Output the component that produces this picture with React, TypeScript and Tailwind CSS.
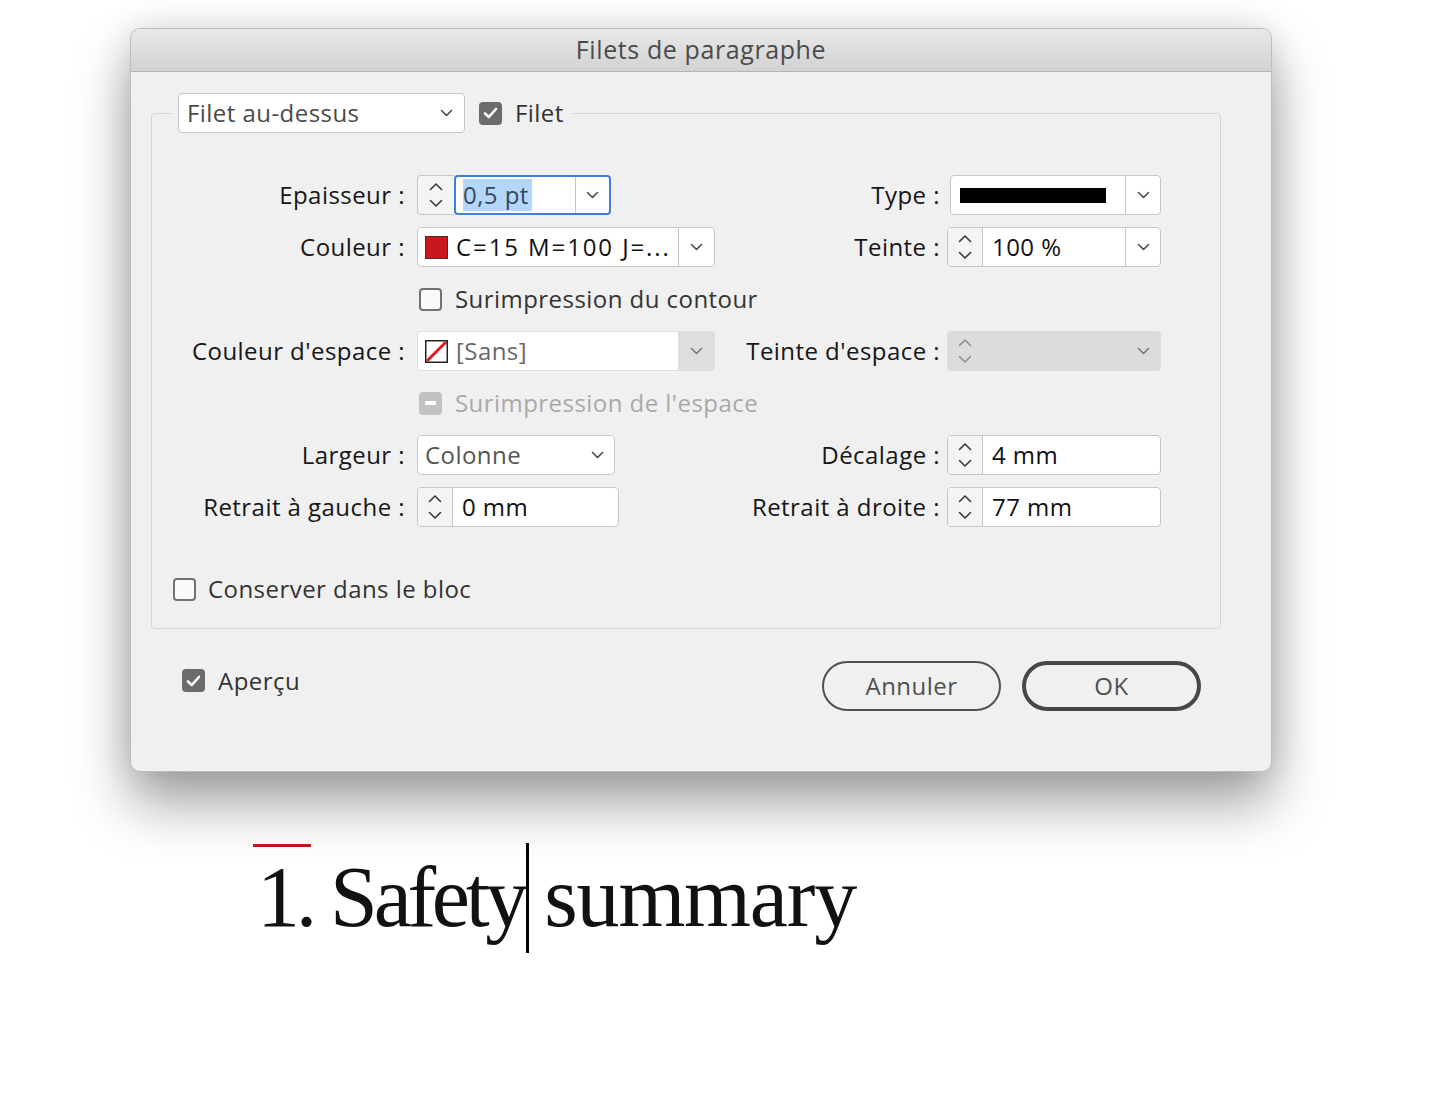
import React from 'react';

const UI_FONT = "font-['Open_Sans','Noto_Sans',sans-serif] tracking-[0.45px]";

const Chevron: React.FC<{ color?: string }> = ({ color = '#4a4a4a' }) => (
  <svg width="13" height="8" viewBox="0 0 13 8" fill="none">
    <path d="M1.5 1.5 L6.5 6.5 L11.5 1.5" stroke={color} strokeWidth="1.6" strokeLinecap="round" strokeLinejoin="round" />
  </svg>
);

const SpinArrows: React.FC<{ color?: string }> = ({ color = '#3a3a3a' }) => (
  <svg width="16" height="28" viewBox="0 0 16 28" fill="none">
    <path d="M2.5 8.5 L8 3 L13.5 8.5" stroke={color} strokeWidth="1.6" strokeLinecap="round" strokeLinejoin="round" />
    <path d="M2.5 19.5 L8 25 L13.5 19.5" stroke={color} strokeWidth="1.6" strokeLinecap="round" strokeLinejoin="round" />
  </svg>
);

const CheckBox: React.FC<{ state: 'off' | 'on' | 'mixed-disabled' }> = ({ state }) => {
  if (state === 'on') {
    return (
      <span className="flex h-[23px] w-[23px] items-center justify-center rounded-[4px] bg-[#6b6b6b]">
        <svg width="15" height="12" viewBox="0 0 15 12" fill="none">
          <path d="M2 6.5 L5.8 10 L13 2" stroke="#fff" strokeWidth="2.6" strokeLinecap="round" strokeLinejoin="round" />
        </svg>
      </span>
    );
  }
  if (state === 'mixed-disabled') {
    return (
      <span className="flex h-[23px] w-[23px] items-center justify-center rounded-[4px] bg-[#c2c2c2]">
        <span className="h-[4px] w-[11px] rounded-[1px] bg-white" />
      </span>
    );
  }
  return <span className="h-[23px] w-[23px] rounded-[4px] border-2 border-[#727272] bg-[#fafafa]" />;
};

const SpinBox: React.FC<{ value: string; width: string; dropdown?: boolean }> = ({ value, width, dropdown }) => (
  <div className={`flex h-[40px] ${width} overflow-hidden rounded-[4px] border border-[#c6c6c6] bg-white`}>
    <div className="flex w-[35px] shrink-0 items-center justify-center border-r border-[#c6c6c6] bg-[#f4f4f4]">
      <SpinArrows />
    </div>
    <div className="flex flex-1 items-center pl-[9px] text-[24px] text-[#111]">{value}</div>
    {dropdown && (
      <div className="flex w-[35px] shrink-0 items-center justify-center border-l border-[#c6c6c6]">
        <Chevron />
      </div>
    )}
  </div>
);

const Label: React.FC<{ children: React.ReactNode; width: string }> = ({ children, width }) => (
  <div className={`${width} shrink-0 text-right text-[24px] text-[#161616]`}>{children}</div>
);

const Row: React.FC<{ children: React.ReactNode }> = ({ children }) => (
  <div className="flex h-[40px] items-center">{children}</div>
);

const LeftCell: React.FC<{ children: React.ReactNode }> = ({ children }) => (
  <div className="ml-[12px] flex w-[313px] shrink-0 items-center">{children}</div>
);

const App: React.FC = () => {
  return (
    <div className={`min-h-[1094px] w-[1430px] bg-white ${UI_FONT}`}>
      <div className="pl-[130px] pt-[28px]">
        {/* dialog */}
        <div className="w-[1142px] overflow-hidden rounded-[10px] border border-[#bdbdbd] bg-[#f0f0f0] shadow-[0_32px_55px_rgba(0,0,0,0.36),0_0_35px_rgba(0,0,0,0.13)]">
          <div className="flex h-[43px] items-center justify-center border-b border-[#b4b4b4] bg-gradient-to-b from-[#e9e9e9] to-[#d2d2d2] text-[25px] tracking-[0.6px] text-[#4b4b4b]">
            Filets de paragraphe
          </div>

          <div className="pl-[20px] pt-[21px] pb-[60px]">
            <fieldset className="w-[1070px] rounded-[4px] border border-[#d6d6d6] pb-[19px] pl-[20px] pt-[42px]">
              <legend className="flex items-center px-[6px]">
                <div className="flex h-[40px] w-[287px] items-center justify-between rounded-[4px] border border-[#c6c6c6] bg-white pl-[8px] pr-[11px] text-[24px] text-[#4a4a4a]">
                  <span>Filet au-dessus</span>
                  <Chevron />
                </div>
                <span className="ml-[14px]"><CheckBox state="on" /></span>
                <span className="ml-[13px] pr-[2px] text-[24px] text-[#333]">Filet</span>
              </legend>

              <div className="flex flex-col gap-[12px]">
                <Row>
                  <Label width="w-[233px]">Epaisseur :</Label>
                  <LeftCell>
                    <div className="flex h-[40px] w-[194px]">
                      <div className="flex w-[37px] shrink-0 items-center justify-center rounded-l-[4px] border border-r-0 border-[#c6c6c6] bg-[#f4f4f4]">
                        <SpinArrows />
                      </div>
                      <div className="flex flex-1 rounded-[4px] border-2 border-[#3d7fdb] bg-white">
                        <div className="flex flex-1 items-center pl-[7px]">
                          <span className="bg-[#b3d6fd] py-[1px] pr-[3px] text-[24px] leading-[30px] text-[#3a4656]">0,5 pt</span>
                        </div>
                        <div className="flex w-[34px] items-center justify-center border-l border-[#c6c6c6]">
                          <Chevron />
                        </div>
                      </div>
                    </div>
                  </LeftCell>
                  <Label width="w-[210px]">Type :</Label>
                  <div className="ml-[10px] flex h-[40px] w-[211px] overflow-hidden rounded-[4px] border border-[#c6c6c6] bg-white">
                    <div className="flex flex-1 items-center pl-[9px]">
                      <div className="h-[15px] w-[146px] bg-black" />
                    </div>
                    <div className="flex w-[35px] items-center justify-center border-l border-[#c6c6c6]">
                      <Chevron />
                    </div>
                  </div>
                </Row>

                <Row>
                  <Label width="w-[233px]">Couleur :</Label>
                  <LeftCell>
                    <div className="flex h-[40px] w-[298px] overflow-hidden rounded-[4px] border border-[#c6c6c6] bg-white">
                      <div className="flex flex-1 items-center pl-[7px]">
                        <span className="h-[23px] w-[23px] border border-[#5a2626] bg-[#c9171e]" />
                        <span className="ml-[8px] text-[24px] tracking-[1.9px] text-[#111]">C=15 M=100 J=...</span>
                      </div>
                      <div className="flex w-[36px] items-center justify-center border-l border-[#c6c6c6]">
                        <Chevron />
                      </div>
                    </div>
                  </LeftCell>
                  <Label width="w-[210px]">Teinte :</Label>
                  <div className="ml-[7px]">
                    <SpinBox value="100 %" width="w-[214px]" dropdown />
                  </div>
                </Row>

                <Row>
                  <div className="w-[233px] shrink-0" />
                  <div className="ml-[14px] flex items-center gap-[13px]">
                    <CheckBox state="off" />
                    <span className="text-[24px] text-[#333]">Surimpression du contour</span>
                  </div>
                </Row>

                <Row>
                  <Label width="w-[233px]">Couleur d'espace :</Label>
                  <LeftCell>
                    <div className="flex h-[40px] w-[298px] rounded-[4px] bg-[#dedede] p-[1px]">
                      <div className="flex flex-1 items-center rounded-l-[3px] bg-white pl-[7px]">
                        <svg width="23" height="23" viewBox="0 0 23 23">
                          <rect x="0.75" y="0.75" width="21.5" height="21.5" fill="#fff" stroke="#222" strokeWidth="1.5" />
                          <path d="M2 21 L21 2" stroke="#e8141c" strokeWidth="3" />
                        </svg>
                        <span className="ml-[8px] text-[24px] text-[#686868]">[Sans]</span>
                      </div>
                      <div className="flex w-[36px] items-center justify-center">
                        <Chevron color="#7a7a7a" />
                      </div>
                    </div>
                  </LeftCell>
                  <Label width="w-[210px]">Teinte d'espace :</Label>
                  <div className="ml-[7px] flex h-[40px] w-[214px] items-center justify-between rounded-[4px] bg-[#dcdcdc] pl-[10px] pr-[11px]">
                    <SpinArrows color="#8e8e8e" />
                    <Chevron color="#7a7a7a" />
                  </div>
                </Row>

                <Row>
                  <div className="w-[233px] shrink-0" />
                  <div className="ml-[14px] flex items-center gap-[13px]">
                    <CheckBox state="mixed-disabled" />
                    <span className="text-[24px] text-[#a9a9a9]">Surimpression de l'espace</span>
                  </div>
                </Row>

                <Row>
                  <Label width="w-[233px]">Largeur :</Label>
                  <LeftCell>
                    <div className="flex h-[40px] w-[198px] items-center justify-between rounded-[4px] border border-[#c6c6c6] bg-white pl-[7px] pr-[10px] text-[24px] text-[#555]">
                      <span>Colonne</span>
                      <Chevron />
                    </div>
                  </LeftCell>
                  <Label width="w-[210px]">Décalage :</Label>
                  <div className="ml-[7px]">
                    <SpinBox value="4 mm" width="w-[214px]" />
                  </div>
                </Row>

                <Row>
                  <Label width="w-[233px]">Retrait à gauche :</Label>
                  <LeftCell>
                    <SpinBox value="0 mm" width="w-[202px]" />
                  </LeftCell>
                  <Label width="w-[210px]">Retrait à droite :</Label>
                  <div className="ml-[7px]">
                    <SpinBox value="77 mm" width="w-[214px]" />
                  </div>
                </Row>
              </div>

              <div className="mt-[42px] flex h-[40px] items-center gap-[12px] pl-[1px]">
                <CheckBox state="off" />
                <span className="text-[24px] text-[#333]">Conserver dans le bloc</span>
              </div>
            </fieldset>

            <div className="ml-[31px] mt-[32px] flex w-[1019px] items-start justify-between">
              <div className="mt-[8px] flex items-center gap-[13px]">
                <CheckBox state="on" />
                <span className="text-[24px] leading-[23px] text-[#333]">Aperçu</span>
              </div>
              <div className="flex gap-[21px]">
                <button className="flex h-[50px] w-[179px] items-center justify-center rounded-full border-2 border-[#505050] text-[24px] text-[#505050]">
                  Annuler
                </button>
                <button className="flex h-[50px] w-[179px] items-center justify-center rounded-full border-4 border-[#474747] text-[24px] text-[#505050]">
                  OK
                </button>
              </div>
            </div>
          </div>
        </div>

        {/* document heading beneath the dialog */}
        <div className="ml-[123px] mt-[72px]">
          <div className="h-[3px] w-[58px] bg-[#c3161c]" />
          <div className="ml-[4px] mt-[7px] whitespace-pre font-['Liberation_Serif','Times_New_Roman',serif] text-[86px] leading-none text-[#111]">
            <span className="tracking-[-4.3px]">1. Safety</span>
            <span className="relative inline-block w-0">
              <span className="absolute left-[2px] top-[-83px] h-[110px] w-[3px] bg-black" />
            </span>
            <span className="tracking-[-1.2px]"> summary</span>
          </div>
        </div>
      </div>
    </div>
  );
};

export default App;
